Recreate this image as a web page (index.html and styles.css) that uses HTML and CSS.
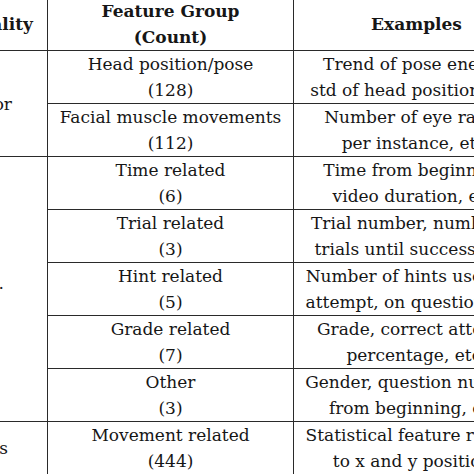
FILE: index.html
```html
<!DOCTYPE html>
<html>
<head>
<meta charset="utf-8">
<link rel="stylesheet" href="styles.css">
</head>
<body>
<table class="features">
  <colgroup>
    <col class="col-modality">
    <col class="col-group">
    <col class="col-examples">
  </colgroup>
  <thead>
    <tr>
      <th class="modality modality-head">Modality</th>
      <th>Feature Group<br>(Count)</th>
      <th>Examples</th>
    </tr>
  </thead>
  <tbody>
    <tr>
      <td class="modality modality-face" rowspan="2">Behavior</td>
      <td>Head position/pose<br>(128)</td>
      <td>Trend of pose energy,<br>std of head position, etc.</td>
    </tr>
    <tr>
      <td>Facial muscle movements<br>(112)</td>
      <td>Number of eye raises<br>per instance, etc.</td>
    </tr>
    <tr>
      <td class="modality modality-log" rowspan="5">Interaction info.</td>
      <td>Time related<br>(6)</td>
      <td>Time from beginning,<br>video duration, etc.</td>
    </tr>
    <tr>
      <td>Trial related<br>(3)</td>
      <td>Trial number, number of<br>trials until success, etc.</td>
    </tr>
    <tr>
      <td>Hint related<br>(5)</td>
      <td>Number of hints used per<br>attempt, on question, etc.</td>
    </tr>
    <tr>
      <td>Grade related<br>(7)</td>
      <td>Grade, correct attempt<br>percentage, etc.</td>
    </tr>
    <tr>
      <td>Other<br>(3)</td>
      <td>Gender, question number,<br>from beginning, etc.</td>
    </tr>
    <tr>
      <td class="modality modality-mouse">Mouse movements</td>
      <td>Movement related<br>(444)</td>
      <td>Statistical feature related<br>to x and y positions</td>
    </tr>
  </tbody>
</table>
</body>
</html>
```
FILE: styles.css
```css
html, body {
  margin: 0;
  padding: 0;
  background: #ffffff;
  overflow: hidden;
  width: 474px;
  height: 474px;
}

.features {
  border-collapse: collapse;
  table-layout: fixed;
  width: 752px;
  margin-left: -213px;
  margin-top: -3px;
  font-family: "DejaVu Serif", serif;
  font-size: 17px;
  line-height: 26px;
  color: #161616;
}

.col-modality {
  width: 260px;
}

.col-group {
  width: 246px;
}

.col-examples {
  width: 246px;
}

.features th,
.features td {
  border: 1px solid #2a2a2a;
  padding: 0 8px;
  text-align: center;
  vertical-align: middle;
  white-space: nowrap;
  overflow: hidden;
}

.features th {
  font-weight: bold;
}

.features .modality {
  text-align: right;
}

.features .modality-head {
  padding-right: 14px;
}

.features .modality-face {
  padding-right: 35px;
}

.features .modality-log {
  padding-right: 43px;
  padding-bottom: 12px;
}

.features .modality-mouse {
  padding-right: 39px;
}
```
